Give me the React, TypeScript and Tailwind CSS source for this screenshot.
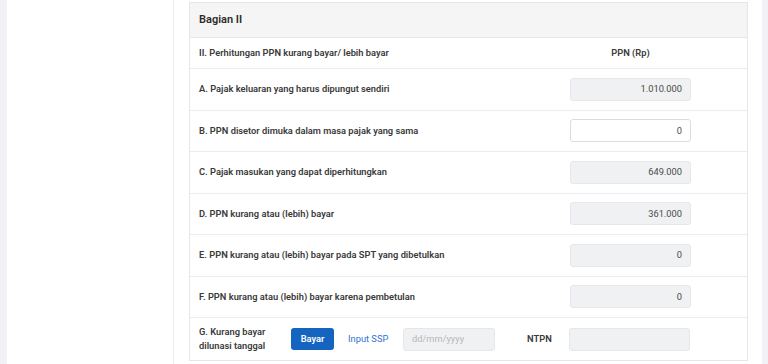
import React from 'react'

interface Row {
  label: string
  value: string
  editable?: boolean
}

const ROWS: Row[] = [
  { label: 'A. Pajak keluaran yang harus dipungut sendiri', value: '1.010.000' },
  { label: 'B. PPN disetor dimuka dalam masa pajak yang sama', value: '0', editable: true },
  { label: 'C. Pajak masukan yang dapat diperhitungkan', value: '649.000' },
  { label: 'D. PPN kurang atau (lebih) bayar', value: '361.000' },
  { label: 'E. PPN kurang atau (lebih) bayar pada SPT yang dibetulkan', value: '0' },
  { label: 'F. PPN kurang atau (lebih) bayar karena pembetulan', value: '0' },
]

function ValueBox({ value, editable }: { value: string; editable?: boolean }) {
  return (
    <div
      className={`w-[121px] h-[23px] rounded-[3px] border flex items-center justify-end px-[8px] text-[9.3px] text-[#4a4a4a] ${
        editable ? 'bg-white border-[#dcdcdc]' : 'bg-[#f0f1f3] border-[#e6e7ea]'
      }`}
    >
      {value}
    </div>
  )
}

export default function App() {
  return (
    <div
      className="w-full h-[364px] overflow-hidden flex bg-[#f1f2f5]"
      style={{ fontFamily: 'Roboto, "Noto Sans", sans-serif' }}
    >
      <div className="ml-[7px] mr-[6px] flex-1 flex bg-white">
        {/* sidebar */}
        <div className="w-[167px] h-full border-r border-[#eeeeee]" />

        {/* main */}
        <div className="flex-1 pl-[15px] pr-[14px]">
          <div className="mt-[2px] border border-[#e6e6e6] bg-white text-[#3a3a3a]">
            <div className="h-[35px] bg-[#f5f5f5] flex items-center px-[9px] border-b border-[#e8e8e8]">
              <span className="text-[11px] font-semibold text-[#2b2b2b]">Bagian II</span>
            </div>

            <div className="h-[31px] flex items-center px-[9px] border-b border-[#ececec]">
              <span className="flex-1 text-[9.3px] font-semibold">II. Perhitungan PPN kurang bayar/ lebih bayar</span>
              <span className="w-[121px] mr-[47px] text-center text-[9.3px] font-semibold">PPN (Rp)</span>
            </div>

            {ROWS.map((row) => (
              <div key={row.label} className="h-[41.5px] flex items-center px-[9px] border-b border-[#ececec]">
                <span className="flex-1 text-[9.3px] font-semibold">{row.label}</span>
                <div className="mr-[47px]">
                  <ValueBox value={row.value} editable={row.editable} />
                </div>
              </div>
            ))}

            <div className="h-[42px] flex items-center px-[9px]">
              <span className="w-[92px] text-[9.3px] font-semibold leading-[14px]">
                G. Kurang bayar
                <br />
                dilunasi tanggal
              </span>
              <button className="w-[43px] h-[22px] rounded-[3px] bg-[#1565c0] text-white text-[9.3px] font-semibold">
                Bayar
              </button>
              <span className="ml-[14px] w-[55px] text-[9.3px] text-[#2f73d1]">Input SSP</span>
              <div className="w-[92px] h-[23px] rounded-[3px] bg-[#f0f1f3] border border-[#e6e7ea] flex items-center px-[8px] text-[9.3px] text-[#b8b8b8]">
                dd/mm/yyyy
              </div>
              <span className="ml-[32px] w-[42px] text-[9.3px] font-semibold">NTPN</span>
              <ValueBox value="" />
            </div>
          </div>
        </div>
      </div>
    </div>
  )
}
